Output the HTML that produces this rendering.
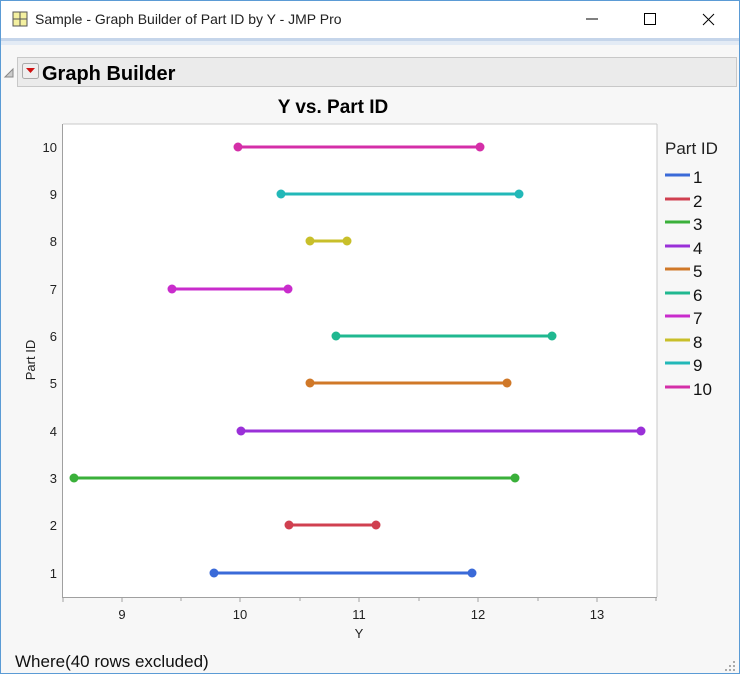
<!DOCTYPE html>
<html><head><meta charset="utf-8"><style>
html,body{margin:0;padding:0;width:740px;height:674px;overflow:hidden;background:#f7f7f7}
svg{display:block}
text{font-family:"Liberation Sans",sans-serif}
</style></head><body>
<svg width="740" height="674" viewBox="0 0 740 674" xmlns="http://www.w3.org/2000/svg">
<rect x="0" y="0" width="740" height="674" fill="#f7f7f7"/>
<rect x="0.5" y="0.5" width="739" height="673" fill="none" stroke="#5b9bd5"/>
<rect x="1" y="1" width="738" height="37" fill="#fff"/>
<rect x="1" y="38" width="738" height="3" fill="#c5d5ea"/>
<rect x="1" y="41" width="738" height="4" fill="#e3ebf5"/>
<!-- title icon -->
<rect x="13" y="12" width="14" height="14" fill="#f4f0a0" stroke="#555"/>
<line x1="20" y1="12" x2="20" y2="26" stroke="#555"/><line x1="13" y1="19" x2="27" y2="19" stroke="#555"/>
<text x="35" y="24" font-size="14" fill="#222">Sample - Graph Builder of Part ID by Y - JMP Pro</text>
<line x1="586" y1="19" x2="598" y2="19" stroke="#000"/>
<rect x="644.5" y="13.5" width="11" height="11" fill="none" stroke="#000"/>
<path d="M703 14 L714 25 M714 14 L703 25" stroke="#000"/>
<!-- outline header -->
<rect x="17.5" y="57.5" width="719" height="29" fill="#ebebeb" stroke="#c8c8c8"/>
<path d="M5 77 L13 77 L13 69 Z" fill="#ccc" stroke="#888"/>
<rect x="22.5" y="63.5" width="16" height="15" rx="2" fill="#eee" stroke="#aaa"/>
<path d="M26 68 L35 68 L30.5 73 Z" fill="#d01010"/>
<text x="42" y="80" font-size="20" font-weight="bold" fill="#000">Graph Builder</text>
<text x="333" y="113" font-size="19" font-weight="bold" text-anchor="middle" fill="#000">Y vs. Part ID</text>
<!-- plot frame -->
<rect x="63" y="124" width="594" height="473" fill="#fff"/>
<line x1="63" y1="124" x2="657" y2="124" stroke="#c8c8c8"/>
<line x1="657" y1="124" x2="657" y2="597" stroke="#c8c8c8"/>
<line x1="62.5" y1="124" x2="62.5" y2="597" stroke="#a0a0a0"/>
<line x1="62" y1="597.5" x2="657" y2="597.5" stroke="#a0a0a0"/>
<g stroke="#a0a0a0">
<line x1="63" y1="597" x2="63" y2="602"/><line x1="122" y1="597" x2="122" y2="602"/><line x1="181" y1="597" x2="181" y2="601"/><line x1="240" y1="597" x2="240" y2="602"/><line x1="300" y1="597" x2="300" y2="601"/><line x1="359" y1="597" x2="359" y2="602"/><line x1="419" y1="597" x2="419" y2="601"/><line x1="478" y1="597" x2="478" y2="602"/><line x1="538" y1="597" x2="538" y2="601"/><line x1="597" y1="597" x2="597" y2="602"/><line x1="656" y1="597" x2="656" y2="601"/>
</g>
<g font-size="13" fill="#222" text-anchor="middle">
<text x="122" y="619">9</text><text x="240" y="619">10</text><text x="359" y="619">11</text><text x="478" y="619">12</text><text x="597" y="619">13</text>
<text x="359" y="638">Y</text>
</g>
<g font-size="13" fill="#222" text-anchor="end">
<text x="57" y="152">10</text><text x="57" y="199">9</text><text x="57" y="246">8</text><text x="57" y="294">7</text><text x="57" y="341">6</text><text x="57" y="388">5</text><text x="57" y="436">4</text><text x="57" y="483">3</text><text x="57" y="530">2</text><text x="57" y="578">1</text>
</g>
<text x="35" y="360" font-size="13" fill="#222" text-anchor="middle" transform="rotate(-90 35 360)">Part ID</text>
<!-- segments -->
<g stroke-width="3">
<line x1="238" y1="147" x2="480" y2="147" stroke="#d42fa8"/>
<line x1="281" y1="194" x2="519" y2="194" stroke="#22b8b8"/>
<line x1="310" y1="241" x2="347" y2="241" stroke="#c8bf2a"/>
<line x1="172" y1="289" x2="288" y2="289" stroke="#c92ccc"/>
<line x1="336" y1="336" x2="552" y2="336" stroke="#20b890"/>
<line x1="310" y1="383" x2="507" y2="383" stroke="#d07828"/>
<line x1="241" y1="431" x2="641" y2="431" stroke="#9a30d8"/>
<line x1="74" y1="478" x2="515" y2="478" stroke="#3ab03a"/>
<line x1="289" y1="525" x2="376" y2="525" stroke="#d04050"/>
<line x1="214" y1="573" x2="472" y2="573" stroke="#3a6ad8"/>
</g>
<g>
<circle cx="238" cy="147" r="4.5" fill="#d42fa8"/><circle cx="480" cy="147" r="4.5" fill="#d42fa8"/>
<circle cx="281" cy="194" r="4.5" fill="#22b8b8"/><circle cx="519" cy="194" r="4.5" fill="#22b8b8"/>
<circle cx="310" cy="241" r="4.5" fill="#c8bf2a"/><circle cx="347" cy="241" r="4.5" fill="#c8bf2a"/>
<circle cx="172" cy="289" r="4.5" fill="#c92ccc"/><circle cx="288" cy="289" r="4.5" fill="#c92ccc"/>
<circle cx="336" cy="336" r="4.5" fill="#20b890"/><circle cx="552" cy="336" r="4.5" fill="#20b890"/>
<circle cx="310" cy="383" r="4.5" fill="#d07828"/><circle cx="507" cy="383" r="4.5" fill="#d07828"/>
<circle cx="241" cy="431" r="4.5" fill="#9a30d8"/><circle cx="641" cy="431" r="4.5" fill="#9a30d8"/>
<circle cx="74" cy="478" r="4.5" fill="#3ab03a"/><circle cx="515" cy="478" r="4.5" fill="#3ab03a"/>
<circle cx="289" cy="525" r="4.5" fill="#d04050"/><circle cx="376" cy="525" r="4.5" fill="#d04050"/>
<circle cx="214" cy="573" r="4.5" fill="#3a6ad8"/><circle cx="472" cy="573" r="4.5" fill="#3a6ad8"/>
</g>
<!-- legend -->
<text x="665" y="154" font-size="17" fill="#222">Part ID</text>
<g stroke-width="3">
<line x1="665" y1="175" x2="690" y2="175" stroke="#3a6ad8"/>
<line x1="665" y1="199" x2="690" y2="199" stroke="#d04050"/>
<line x1="665" y1="222" x2="690" y2="222" stroke="#3ab03a"/>
<line x1="665" y1="246" x2="690" y2="246" stroke="#9a30d8"/>
<line x1="665" y1="269" x2="690" y2="269" stroke="#d07828"/>
<line x1="665" y1="293" x2="690" y2="293" stroke="#20b890"/>
<line x1="665" y1="316" x2="690" y2="316" stroke="#c92ccc"/>
<line x1="665" y1="340" x2="690" y2="340" stroke="#c8bf2a"/>
<line x1="665" y1="363" x2="690" y2="363" stroke="#22b8b8"/>
<line x1="665" y1="387" x2="690" y2="387" stroke="#d42fa8"/>
</g>
<g font-size="17" fill="#111">
<text x="693" y="183">1</text><text x="693" y="207">2</text><text x="693" y="230">3</text><text x="693" y="254">4</text><text x="693" y="277">5</text><text x="693" y="301">6</text><text x="693" y="324">7</text><text x="693" y="348">8</text><text x="693" y="371">9</text><text x="693" y="395">10</text>
</g>
<text x="15" y="667" font-size="17" fill="#111">Where(40 rows excluded)</text>
<g fill="#aaa"><rect x="733" y="661" width="2" height="2"/><rect x="729" y="665" width="2" height="2"/><rect x="733" y="665" width="2" height="2"/><rect x="725" y="669" width="2" height="2"/><rect x="729" y="669" width="2" height="2"/><rect x="733" y="669" width="2" height="2"/></g>
</svg>
</body></html>
